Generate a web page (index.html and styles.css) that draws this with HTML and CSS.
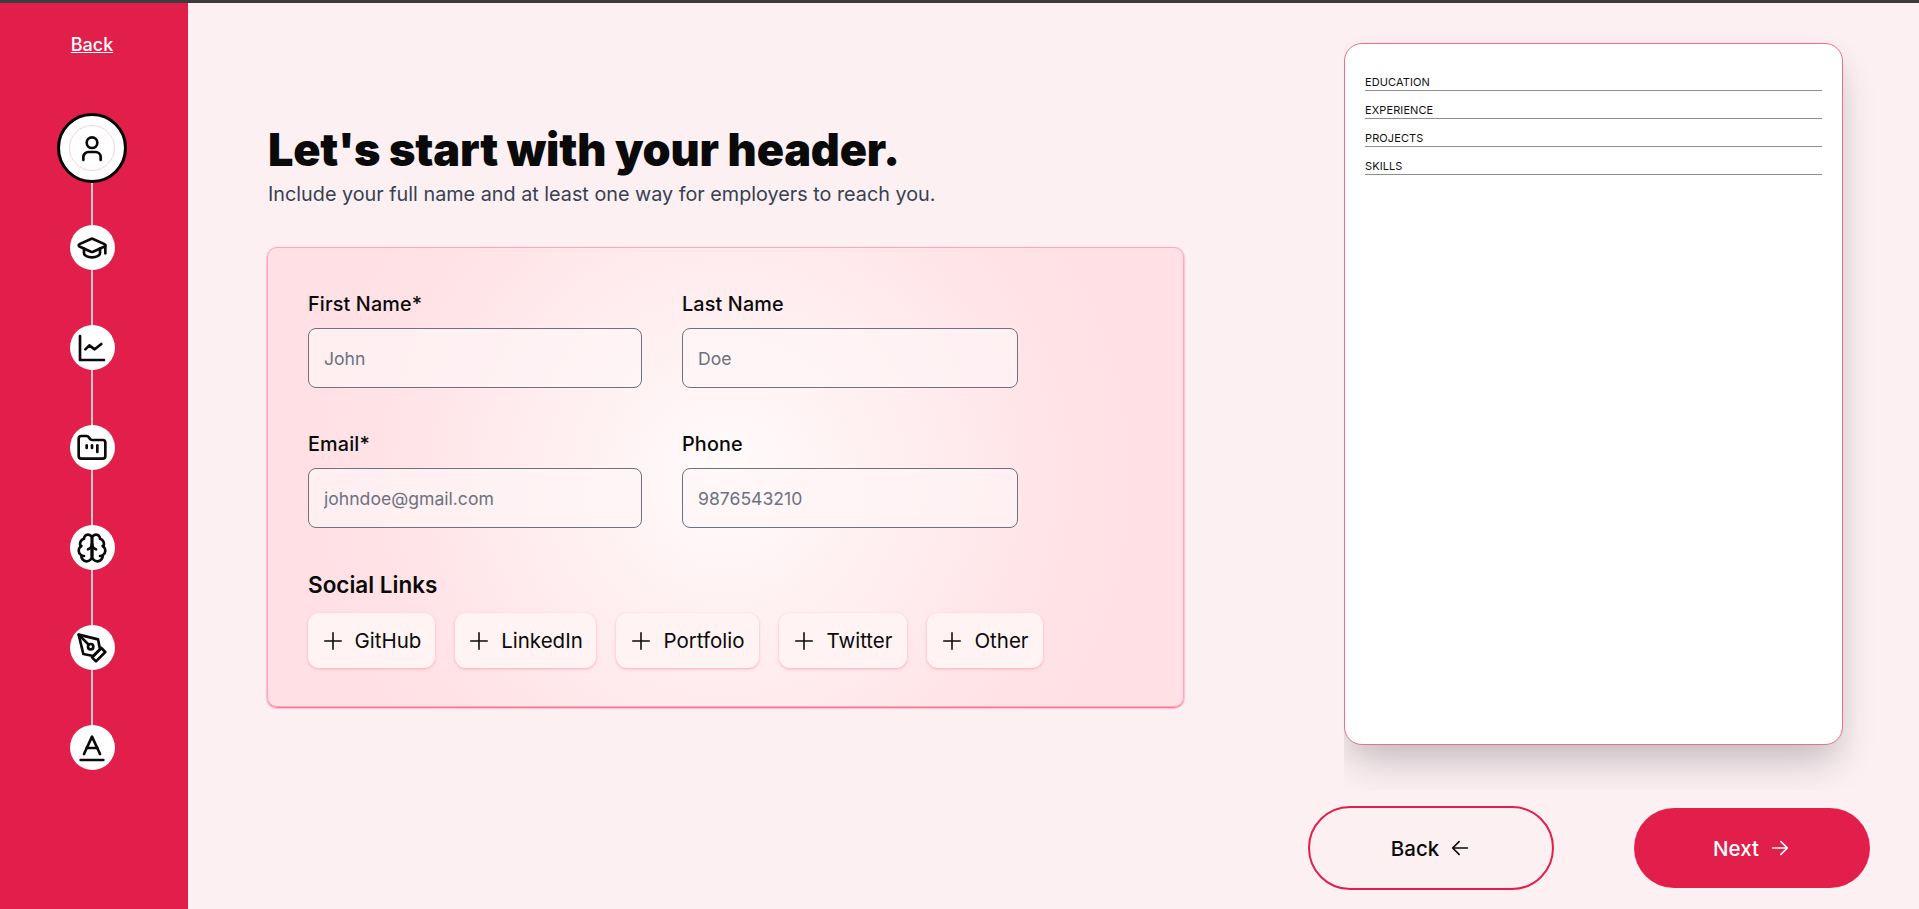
FILE: index.html
```html
<!DOCTYPE html>
<html lang="en">
<head>
<meta charset="utf-8">
<title>Resume builder</title>
<link rel="stylesheet" href="styles.css">
</head>
<body>
<div class="topbar"></div>
<div class="app">
  <aside class="sidebar">
    <a class="side-back" href="#">Back</a>
    <div class="stepper">
      <div class="step active"><div class="step-inner">
        <svg class="ico" viewBox="0 0 24 24"><circle cx="12" cy="8" r="4"/><path d="M5.500 21v-2a4 4 0 0 1 4-4h5a4 4 0 0 1 4 4v2"/></svg>
      </div></div>
      <div class="conn first"></div>
      <div class="step">
        <svg class="ico" viewBox="0 0 24 24"><path d="M21.400 10.900a1 1 0 0 0 0-1.800L12.800 5.200a2 2 0 0 0-1.600 0L2.600 9.100a1 1 0 0 0 0 1.800l8.600 3.900a2 2 0 0 0 1.600 0z"/><path d="M22 10v6"/><path d="M6 12.500V16a6 3 0 0 0 12 0v-3.500"/></svg>
      </div>
      <div class="conn"></div>
      <div class="step">
        <svg class="ico" viewBox="0 0 24 24"><path d="M3 3v18h18"/><path d="m19 9-5 4-4-3-3 3"/></svg>
      </div>
      <div class="conn"></div>
      <div class="step">
        <svg class="ico" viewBox="0 0 24 24"><path d="M4 20h16a2 2 0 0 0 2-2V8a2 2 0 0 0-2-2h-7.930a2 2 0 0 1-1.660-.9l-.82-1.200A2 2 0 0 0 7.930 3H4a2 2 0 0 0-2 2v13c0 1.100.9 2 2 2Z"/><path d="M8 10v2"/><path d="M12 10v2"/><path d="M16 10v5"/></svg>
      </div>
      <div class="conn"></div>
      <div class="step">
        <svg class="ico" viewBox="0 0 24 24"><path d="M12 5a3 3 0 1 0-5.997.125 4 4 0 0 0-2.526 5.770 4 4 0 0 0 .556 6.588A4 4 0 1 0 12 18Z"/><path d="M12 5a3 3 0 1 1 5.997.125 4 4 0 0 1 2.526 5.770 4 4 0 0 1-.556 6.588A4 4 0 1 1 12 18Z"/><path d="M15 13a4.500 4.500 0 0 1-3-4 4.500 4.500 0 0 1-3 4"/><path d="M12 9v9"/><path d="M3.477 10.896a4 4 0 0 1 .585-.396"/><path d="M19.938 10.500a4 4 0 0 1 .585.396"/><path d="M6 18a4 4 0 0 1-1.967-.516"/><path d="M19.967 17.484A4 4 0 0 1 18 18"/></svg>
      </div>
      <div class="conn"></div>
      <div class="step">
        <svg class="ico" viewBox="0 0 24 24"><path d="m12 19 7-7 3 3-7 7-3-3z"/><path d="m18 13-1.500-7.500L2 2l3.500 14.500L13 18l5-5z"/><path d="m2 2 7.586 7.586"/><circle cx="11" cy="11" r="2"/></svg>
      </div>
      <div class="conn"></div>
      <div class="step">
        <svg class="ico" viewBox="0 0 24 24"><path d="M3.500 21h17"/><path d="m6 16.500 6-13 6 13"/><path d="M8 12h8"/></svg>
      </div>
    </div>
  </aside>

  <main class="main">
    <section class="form-col">
      <h1 class="title">Let's start with your header.</h1>
      <p class="subtitle">Include your full name and at least one way for employers to reach you.</p>
      <form class="card">
        <div class="fields">
          <label class="field"><span class="label">First Name*</span><input class="input" placeholder="John"></label>
          <label class="field"><span class="label">Last Name</span><input class="input" placeholder="Doe"></label>
          <label class="field"><span class="label">Email*</span><input class="input" placeholder="johndoe@gmail.com"></label>
          <label class="field"><span class="label">Phone</span><input class="input" placeholder="9876543210"></label>
        </div>
        <h2 class="social-title">Social Links</h2>
        <div class="socials">
          <button type="button" class="chip github"><svg class="plus" viewBox="0 0 24 24"><path d="M12 3v18M3 12h18"/></svg>GitHub</button>
          <button type="button" class="chip linkedin"><svg class="plus" viewBox="0 0 24 24"><path d="M12 3v18M3 12h18"/></svg>LinkedIn</button>
          <button type="button" class="chip portfolio"><svg class="plus" viewBox="0 0 24 24"><path d="M12 3v18M3 12h18"/></svg>Portfolio</button>
          <button type="button" class="chip twitter"><svg class="plus" viewBox="0 0 24 24"><path d="M12 3v18M3 12h18"/></svg>Twitter</button>
          <button type="button" class="chip other"><svg class="plus" viewBox="0 0 24 24"><path d="M12 3v18M3 12h18"/></svg>Other</button>
        </div>
      </form>
    </section>

    <section class="side-col">
      <div class="preview-clip">
        <div class="preview">
          <div class="pv-row">EDUCATION</div>
          <div class="pv-row">EXPERIENCE</div>
          <div class="pv-row">PROJECTS</div>
          <div class="pv-row">SKILLS</div>
        </div>
      </div>
      <div class="nav">
        <button type="button" class="nav-btn back">Back<svg class="arrow" viewBox="0 0 24 24"><path d="M20 12H4M11 5l-7 7 7 7"/></svg></button>
        <button type="button" class="nav-btn next">Next<svg class="arrow" viewBox="0 0 24 24"><path d="M4 12h16M13 5l7 7-7 7"/></svg></button>
      </div>
    </section>
  </main>
</div>
</body>
</html>
```
FILE: styles.css
```css
* { box-sizing: border-box; }
html, body { margin: 0; height: 100%; }
body {
  background: #fcf0f3;
  font-family: "Inter", "Noto Sans", sans-serif;
  color: #0a0a0a;
  overflow: hidden;
}
.topbar { height: 3px; background: #3c3c3c; }
.app { display: flex; height: 906px; }

.sidebar {
  width: 188px;
  flex: none;
  background: #e21f4a;
  display: flex;
  flex-direction: column;
  align-items: center;
  padding: 30px 4px 0 0;
}
.side-back {
  color: #fff;
  font-weight: 500;
  font-size: 18px;
  line-height: 23px;
  text-decoration: underline;
  margin-bottom: 57px;
}
.stepper { display: flex; flex-direction: column; align-items: center; }
.step {
  width: 45px;
  height: 45px;
  border-radius: 50%;
  background: #fff;
  display: flex;
  align-items: center;
  justify-content: center;
  flex: none;
}
.step.active { width: 70px; height: 70px; border: 3px solid #000; }
.step-inner {
  width: 46px;
  height: 46px;
  border-radius: 50%;
  border: 1px solid #ecd5db;
  display: flex;
  align-items: center;
  justify-content: center;
}
.conn { width: 2px; height: 55px; background: #e9c4cf; flex: none; }
.conn.first { height: 42px; }
.ico {
  width: 32px;
  height: 32px;
  fill: none;
  stroke: #0a0a0a;
  stroke-width: 2;
  stroke-linecap: round;
  stroke-linejoin: round;
}

.main { flex: 1; display: flex; min-width: 0; }
.form-col { width: 1120px; flex: none; padding: 118px 0 0 79px; }
.title {
  margin: 0 0 0 1px;
  font-weight: 900;
  font-size: 45px;
  line-height: 58px;
  letter-spacing: -0.2px;
  color: #0a0a0a;
}
.subtitle {
  margin: 2px 0 0 1px;
  font-size: 19.800px;
  line-height: 26px;
  color: #374151;
}
.card {
  margin-top: 40px;
  width: 917px;
  height: 460px;
  border: 1px solid #fba9b8;
  border-radius: 10px;
  background: radial-gradient(circle at 50% 50%, #fffbfb 0%, #ffe2e6 68%, #ffe0e4 100%);
  box-shadow: 0 1px 2px #ee5470;
  padding: 44px 40px 0;
}
.fields {
  display: grid;
  grid-template-columns: 334px 336px;
  column-gap: 40px;
  row-gap: 44px;
}
.field { display: flex; flex-direction: column; gap: 12px; }
.label { font-size: 19.800px; line-height: 24px; font-weight: 500; letter-spacing: .15px; color: #0a0a0a; }
.input {
  height: 60px;
  border: 1px solid #6b7280;
  border-radius: 8px;
  background: rgba(255, 245, 247, .7);
  padding: 0 15px;
  font-family: inherit;
  font-size: 17.600px;
  outline: none;
}
.input::placeholder { color: #6b7280; opacity: 1; }
.social-title { margin: 44px 0 0; font-size: 22.500px; line-height: 26px; font-weight: 600; }
.socials { display: flex; gap: 20px; margin-top: 15px; }
.chip {
  height: 55px;
  padding: 0;
  border: 0;
  border-radius: 11px;
  background: #fff3f4;
  box-shadow: 0 1px 3px #fba9b8;
  display: flex;
  align-items: center;
  justify-content: center;
  gap: 11px;
  font-family: inherit;
  font-size: 20.500px;
  color: #0a0a0a;
}
.chip.github { width: 127px; }
.chip.linkedin { width: 141px; }
.chip.portfolio { width: 143px; }
.chip.twitter { width: 128px; }
.chip.other { width: 116px; }
.plus { width: 22px; height: 22px; fill: none; stroke: #0a0a0a; stroke-width: 1.700; stroke-linecap: round; }

.side-col { flex: 1; display: flex; flex-direction: column; min-width: 0; }
.preview-clip {
  margin-left: 36px;
  width: 560px;
  height: 787px;
  padding-top: 40px;
  overflow: hidden;
}
.preview {
  width: 499px;
  height: 702px;
  background: #fff;
  border: 1px solid #e8708c;
  border-radius: 18px;
  box-shadow: 0 22px 40px -6px rgba(0,0,0,.2), 0 8px 24px rgba(0,0,0,.04);
  padding: 29px 20px 0;
  display: flex;
  flex-direction: column;
  gap: 10px;
}
.pv-row {
  height: 18px;
  border-bottom: 1px solid #8f8f8f;
  font-size: 11px;
  line-height: 19px;
  font-weight: 400;
  letter-spacing: .1px;
  color: #111;
}
.nav {
  margin-top: 16px;
  display: flex;
  align-items: center;
  gap: 80px;
}
.nav-btn {
  border-radius: 42px;
  display: flex;
  align-items: center;
  justify-content: center;
  gap: 10px;
  font-family: inherit;
  font-size: 20.500px;
  font-weight: 500;
  padding: 0;
}
.nav-btn.back { width: 246px; height: 84px; background: transparent; border: 2px solid #e21f4a; color: #0a0a0a; }
.nav-btn.next { width: 236px; height: 80px; background: #e21f4a; border: 0; color: #fff; }
.arrow { width: 22px; height: 22px; fill: none; stroke: currentColor; stroke-width: 1.800; stroke-linecap: round; stroke-linejoin: round; }
```
